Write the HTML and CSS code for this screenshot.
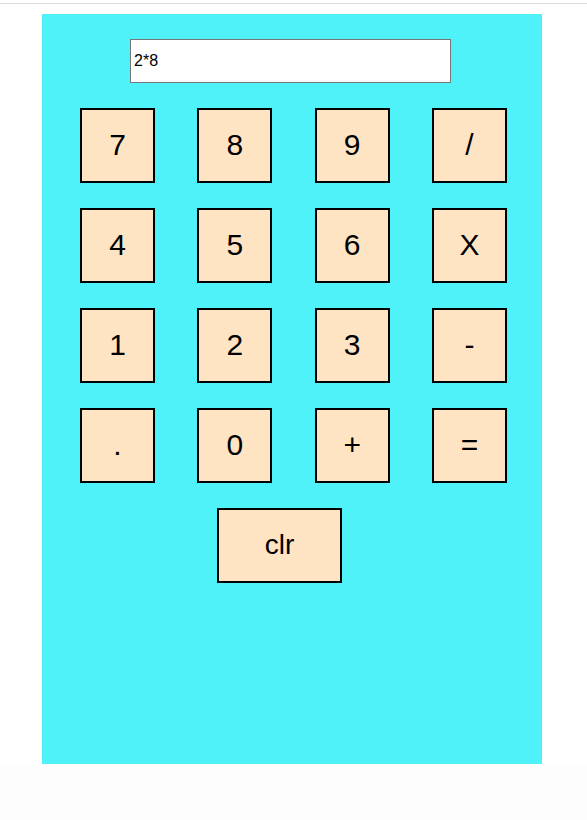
FILE: index.html
```html
<!DOCTYPE html>
<html>
<head>
<meta charset="utf-8">
<title>Calculator</title>
<link rel="stylesheet" href="styles.css">
</head>
<body>
<div class="topline"></div>
<div class="calc">
  <input class="display" type="text" value="2*8">
  <div class="row">
    <button class="key">7</button>
    <button class="key">8</button>
    <button class="key">9</button>
    <button class="key">/</button>
  </div>
  <div class="row">
    <button class="key">4</button>
    <button class="key">5</button>
    <button class="key">6</button>
    <button class="key">X</button>
  </div>
  <div class="row">
    <button class="key">1</button>
    <button class="key">2</button>
    <button class="key">3</button>
    <button class="key">-</button>
  </div>
  <div class="row">
    <button class="key">.</button>
    <button class="key">0</button>
    <button class="key">+</button>
    <button class="key">=</button>
  </div>
  <div class="row-clr">
    <button class="key clr">clr</button>
  </div>
</div>
</body>
</html>
```

FILE: styles.css
```css
html {
  margin: 0;
  padding: 0;
  background: #fdfdfd;
}
body {
  margin: 0;
  padding: 0;
  background: #ffffff;
  font-family: "Liberation Sans", Arial, sans-serif;
}
.topline {
  height: 3px;
  border-bottom: 1px solid #dddddd;
  background: #ffffff;
}
.calc {
  margin: 10px 0 0 42px;
  width: 500px;
  height: 725px;
  padding-top: 25px;
  background: #50f2fa;
  display: flex;
  flex-direction: column;
  gap: 25px;
}
.display {
  box-sizing: border-box;
  margin: 0 0 0 88px;
  width: 321px;
  height: 44px;
  border: 1px solid #767676;
  border-radius: 0;
  padding: 0 3px;
  font-family: "Liberation Sans", Arial, sans-serif;
  font-size: 16px;
  color: #000;
  background: #fff;
  outline: none;
}
.row {
  display: flex;
  justify-content: space-between;
  padding: 0 35px 0 38px;
}
.row-clr {
  display: flex;
  padding-left: 175px;
}
.key {
  box-sizing: border-box;
  width: 75px;
  height: 75px;
  margin: 0;
  padding: 0 0 1px 0;
  border: 2px solid #000;
  border-radius: 0;
  background: #ffe4c4;
  color: #000;
  font-family: "Liberation Sans", Arial, sans-serif;
  font-size: 30px;
  line-height: 1;
}
.clr {
  width: 125px;
  font-size: 28px;
}
```
